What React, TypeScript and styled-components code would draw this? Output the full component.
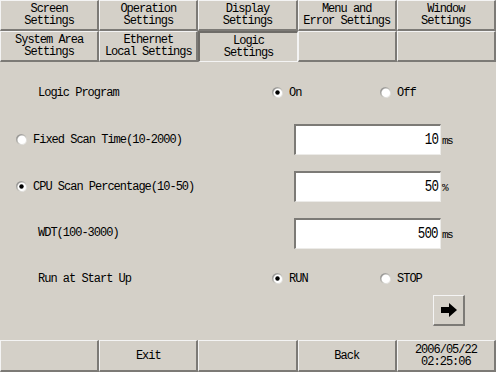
import styled, { createGlobalStyle } from "styled-components";

const GlobalStyle = createGlobalStyle`
	html, body {
		margin: 0;
		padding: 0;
		background: #d4d0c8;
	}
	body {
		font-family: "Liberation Mono", "DejaVu Sans Mono", monospace;
		font-size: 12px;
		color: #000;
	}
`;

const Screen = styled.div`
	width: 496px;
	height: 372px;
	display: flex;
	flex-direction: column;
	background: #d4d0c8;
	overflow: hidden;
`;

const ButtonGrid = styled.div<{ $rows: number }>`
	display: grid;
	grid-template-columns: repeat(5, 1fr);
	grid-auto-rows: ${(p) => (p.$rows === 2 ? "31px" : "32px")};
	background: #a09c94;
`;

const PanelButton = styled.button<{ $active?: boolean }>`
	margin: 0;
	padding: 0;
	font-family: inherit;
	font-size: 12px;
	letter-spacing: -1px;
	line-height: 12px;
	color: #000;
	background: #d4d0c8;
	border-style: solid;
	border-width: ${(p) => (p.$active ? "2px 1px 1px 2px" : "1px 2px 2px 1px")};
	border-color: ${(p) =>
		p.$active
			? "#6e6c68 #f4f4f4 #f4f4f4 #6e6c68"
			: "#f4f4f4 #7c7a76 #7c7a76 #f4f4f4"};
	display: flex;
	flex-direction: column;
	align-items: center;
	justify-content: center;
	white-space: pre;
	cursor: pointer;
`;

const Body = styled.div`
	flex: 1;
	display: flex;
	flex-direction: column;
	padding-top: 7px;
`;

const Row = styled.div<{ $h: number }>`
	height: ${(p) => p.$h}px;
	display: flex;
	align-items: center;
`;

const Label = styled.div<{ $w: number; $radio?: boolean }>`
	width: ${(p) => p.$w}px;
	box-sizing: border-box;
	padding-left: ${(p) => (p.$radio ? 16 : 38)}px;
	display: flex;
	align-items: center;
	gap: 6px;
	letter-spacing: -1px;
	white-space: pre;
`;

const Options = styled.div`
	display: flex;
	align-items: center;
`;

const Option = styled.div`
	width: 108px;
	display: flex;
	align-items: center;
	gap: 6px;
	letter-spacing: -1px;
`;

const Field = styled.div`
	width: 147px;
	height: 31px;
	box-sizing: border-box;
	background: #fff;
	border-style: solid;
	border-width: 2px 1px 1px 2px;
	border-color: #7c7a76 #ecebe8 #ecebe8 #7c7a76;
	display: flex;
	align-items: center;
	justify-content: flex-end;
	padding-right: 2px;
`;

const Digits = styled.span`
	display: inline-block;
	font-size: 16px;
	letter-spacing: -1px;
	transform: scaleX(0.78);
	transform-origin: right center;
`;

const Unit = styled.span`
	margin-left: 1px;
	font-size: 11px;
	letter-spacing: -1.5px;
	padding-top: 3px;
`;

const ArrowRow = styled.div`
	display: flex;
	justify-content: flex-end;
	padding-right: 31px;
	margin-top: -6px;
`;

const ArrowButton = styled.button`
	width: 32px;
	height: 31px;
	margin: 0;
	padding: 0;
	background: #d4d0c8;
	border-style: solid;
	border-width: 1px 2px 2px 1px;
	border-color: #f4f4f4 #7c7a76 #7c7a76 #f4f4f4;
	display: flex;
	align-items: center;
	justify-content: center;
`;

function Radio({ on }: { on?: boolean }) {
	return (
		<svg width="11" height="11" viewBox="0 0 11 11">
			<defs>
				<linearGradient id="rg" x1="0" y1="0" x2="1" y2="1">
					<stop offset="0" stopColor="#808080" />
					<stop offset="0.55" stopColor="#c8c6c0" />
					<stop offset="1" stopColor="#ffffff" />
				</linearGradient>
			</defs>
			<circle cx="5.5" cy="5.5" r="5.5" fill="url(#rg)" />
			<circle cx="5.8" cy="5.8" r="4.3" fill="#fff" />
			{on && <circle cx="5.5" cy="5.5" r="2.2" fill="#000" />}
		</svg>
	);
}

const topButtons = [
	"Screen\nSettings",
	"Operation\nSettings",
	"Display\nSettings",
	"Menu and\nError Settings",
	"Window\nSettings",
	"System Area\nSettings",
	"Ethernet\nLocal Settings",
	"Logic\nSettings",
	"",
	"",
];

export default function App() {
	return (
		<Screen>
			<GlobalStyle />
			<ButtonGrid $rows={2}>
				{topButtons.map((t, i) => (
					<PanelButton key={i} $active={i === 7}>
						{t}
					</PanelButton>
				))}
			</ButtonGrid>
			<Body>
				<Row $h={47}>
					<Label $w={272}>Logic Program</Label>
					<Options>
						<Option>
							<Radio on />
							On
						</Option>
						<Option>
							<Radio />
							Off
						</Option>
					</Options>
				</Row>
				<Row $h={47}>
					<Label $w={294} $radio>
						<Radio />
						Fixed Scan Time(10-2000)
					</Label>
					<Field>
						<Digits>10</Digits>
					</Field>
					<Unit>ms</Unit>
				</Row>
				<Row $h={47}>
					<Label $w={294} $radio>
						<Radio on />
						CPU Scan Percentage(10-50)
					</Label>
					<Field>
						<Digits>50</Digits>
					</Field>
					<Unit>%</Unit>
				</Row>
				<Row $h={46}>
					<Label $w={294}>WDT(100-3000)</Label>
					<Field>
						<Digits>500</Digits>
					</Field>
					<Unit>ms</Unit>
				</Row>
				<Row $h={45}>
					<Label $w={272}>Run at Start Up</Label>
					<Options>
						<Option>
							<Radio on />
							RUN
						</Option>
						<Option>
							<Radio />
							STOP
						</Option>
					</Options>
				</Row>
				<ArrowRow>
					<ArrowButton>
						<svg width="16" height="14" viewBox="0 0 16 14">
							<path d="M0 4 H8 V0 L16 7 L8 14 V10 H0 Z" fill="#000" />
						</svg>
					</ArrowButton>
				</ArrowRow>
			</Body>
			<ButtonGrid $rows={1}>
				<PanelButton />
				<PanelButton>Exit</PanelButton>
				<PanelButton />
				<PanelButton>Back</PanelButton>
				<PanelButton>{"2006/05/22\n02:25:06"}</PanelButton>
			</ButtonGrid>
		</Screen>
	);
}
